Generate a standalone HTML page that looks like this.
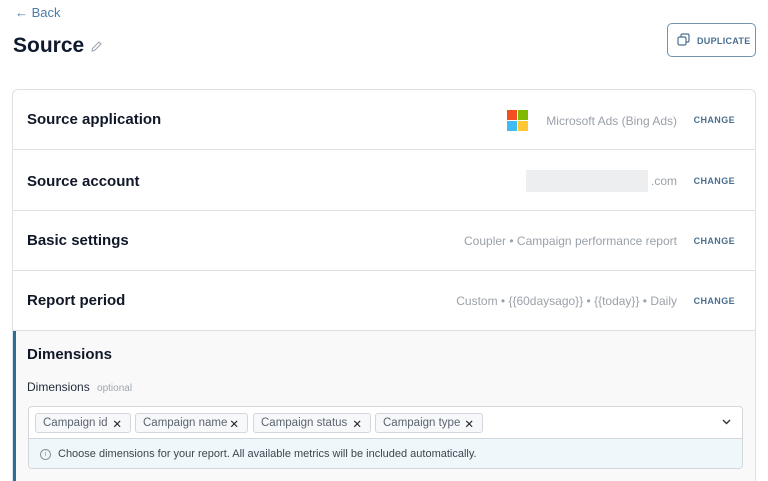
<!DOCTYPE html>
<html style="width:768px;height:481px;overflow:hidden"><head><style>
*{box-sizing:border-box;margin:0;padding:0}
body{width:768px;height:481px;overflow:hidden;background:#fff;font-family:"Liberation Sans",sans-serif;color:#0f1a2e;position:relative}
.abs{position:absolute}
.card{position:absolute;left:12px;top:89px;width:744px;height:392px;border:1px solid #dde1e5;border-bottom:none;border-radius:6px 6px 0 0;overflow:hidden}
.row{position:absolute;left:0;width:742px;height:60px;border-bottom:1px solid #dde1e5}
.row .t{position:absolute;left:14px;top:21px;font-size:15px;font-weight:bold;color:#101828}
.row .v{position:absolute;right:78px;top:23px;font-size:12px;color:#9aa1a9}
.row .c{position:absolute;right:20px;top:25px;font-size:9px;font-weight:bold;color:#4a6f8f;letter-spacing:.4px}
.chip{position:absolute;top:6px;height:20px;border:1px solid #d3d7dc;border-radius:3px;background:#f7f8f9;font-size:11.5px;color:#5b6470;padding:3px 7px;white-space:nowrap}
.chip b{position:absolute;right:8px;top:3px;font-weight:normal;color:#222}
</style></head><body>
<div class="abs" style="left:15px;top:5px;font-size:13px;color:#4d7ea8">← Back</div>
<div class="abs" style="left:13px;top:34px;font-size:21px;font-weight:bold;color:#0f1a2e">Source</div>
<svg class="abs" style="left:90px;top:40px" width="13" height="13" viewBox="0 0 13 13"><path d="M2 11 L2.5 8.5 L9 2 L11 4 L4.5 10.5 Z" fill="none" stroke="#9aa1a9" stroke-width="1"/></svg>
<div class="abs" style="left:667px;top:23px;width:89px;height:34px;border:1px solid #6f94b3;border-radius:5px"></div>
<svg class="abs" style="left:677px;top:33px" width="13" height="13" viewBox="0 0 13 13"><rect x="1" y="4" width="8" height="8" rx="1.5" fill="#fff" stroke="#4a6f8f" stroke-width="1.2"/><path d="M4 3.5 V2.5 Q4 1 5.5 1 H10.5 Q12 1 12 2.5 V7.5 Q12 9 10.5 9 H9.5" fill="none" stroke="#4a6f8f" stroke-width="1.2"/></svg>
<div class="abs" style="left:697px;top:36px;font-size:9px;font-weight:bold;color:#4a6f8f;letter-spacing:.3px">DUPLICATE</div>
<div class="card">
 <div class="row" style="top:0"><div class="t">Source application</div>
  <div class="abs" style="left:494px;top:20px;width:10px;height:10px;background:#f25022"></div>
  <div class="abs" style="left:505px;top:20px;width:10px;height:10px;background:#7fba00"></div>
  <div class="abs" style="left:494px;top:31px;width:10px;height:10px;background:#00a4ef;opacity:.75"></div>
  <div class="abs" style="left:505px;top:31px;width:10px;height:10px;background:#ffb900;opacity:.8"></div>
  <div class="v" style="top:24px">Microsoft Ads (Bing Ads)</div><div class="c">CHANGE</div></div>
 <div class="row" style="top:61px"><div class="t" style="top:22px">Source account</div>
  <div class="abs" style="left:513px;top:19px;width:122px;height:22px;background:#eceef0"></div>
  <div class="v">.com</div><div class="c">CHANGE</div></div>
 <div class="row" style="top:121px"><div class="t">Basic settings</div><div class="v">Coupler • Campaign performance report</div><div class="c">CHANGE</div></div>
 <div class="row" style="top:181px"><div class="t">Report period</div><div class="v">Custom • {{60daysago}} • {{today}} • Daily</div><div class="c">CHANGE</div></div>
 <div class="abs" style="left:0;top:241px;width:742px;height:151px;background:#f9f9fa;border-left:3px solid #2f6d97">
  <div class="abs" style="left:11px;top:15px;font-size:15px;font-weight:bold;color:#101828">Dimensions</div>
  <div class="abs" style="left:11px;top:49px;font-size:12px;color:#1f2937">Dimensions <span style="font-size:10px;color:#a0a6ad;margin-left:4px">optional</span></div>
  <div class="abs" style="left:12px;top:75px;width:715px;height:63px;border:1px solid #d3d7dc;border-radius:4px;background:#fff;overflow:hidden">
   <div class="chip" style="left:6px;width:96px">Campaign id<b>✕</b></div>
   <div class="chip" style="left:106px;width:113px">Campaign name<b>✕</b></div>
   <div class="chip" style="left:224px;width:118px">Campaign status<b>✕</b></div>
   <div class="chip" style="left:346px;width:108px">Campaign type<b>✕</b></div>
   <svg class="abs" style="left:693px;top:12px" width="9" height="6" viewBox="0 0 9 6"><path d="M1 1 L4.5 4.5 L8 1" fill="none" stroke="#333" stroke-width="1.4"/></svg>
   <div class="abs" style="left:0;top:31px;width:715px;height:32px;background:#eff7fa;border-top:1px solid #d3d7dc">
    <div class="abs" style="left:11px;top:10px;width:11px;height:11px;border:1px solid #8a929b;border-radius:50%;font-size:7px;color:#8a929b;text-align:center;line-height:9px">i</div>
    <div class="abs" style="left:29px;top:9px;font-size:11px;color:#3d4650">Choose dimensions for your report. All available metrics will be included automatically.</div>
   </div>
  </div>
 </div>
</div>
</body></html>
